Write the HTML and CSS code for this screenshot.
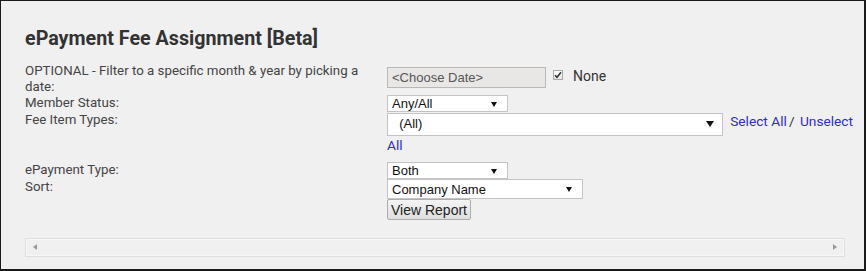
FILE: index.html
```html
<!DOCTYPE html>
<html lang="en">
<head>
    <meta charset="UTF-8">
    <meta name="viewport" content="width=device-width, initial-scale=1.0">
    <title>ePayment Fee Assignment</title>
    <link rel="stylesheet" href="styles.css">
</head>
<body>
    <div class="page">
        <h1>ePayment Fee Assignment [Beta]</h1>
        <div class="form-grid">
            <div class="label">OPTIONAL - Filter to a specific month &amp; year by picking a date:</div>
            <div class="control row-date">
                <input type="text" class="date-input" value="&lt;Choose Date&gt;" readonly>
                <label class="none-check">
                    <span class="check-box">
                        <svg width="8" height="8" viewBox="0 0 8 8"><path d="M1 4.2 L3 6.3 L7 1.3" fill="none" stroke="#333" stroke-width="1.6"/></svg>
                    </span>
                    None
                </label>
            </div>

            <div class="label">Member Status:</div>
            <div class="control">
                <span class="select-wrap"><select class="select sel-small"><option>Any/All</option></select></span>
            </div>

            <div class="label">Fee Item Types:</div>
            <div class="control fee-types">
                <span class="select-wrap"><select class="select sel-wide"><option>&nbsp;&nbsp;(All)</option></select></span>
                <a href="#" class="link">Select All</a> <span class="slash">/</span> <a href="#" class="link">Unselect All</a>
            </div>

            <div class="label row-gap">ePayment Type:</div>
            <div class="control row-gap">
                <span class="select-wrap"><select class="select sel-small"><option>Both</option></select></span>
            </div>

            <div class="label">Sort:</div>
            <div class="control">
                <span class="select-wrap"><select class="select sel-sort"><option>Company Name</option></select></span>
            </div>

            <div class="label"></div>
            <div class="control">
                <button class="btn">View Report</button>
            </div>
        </div>
        <div class="hscroll">
            <span class="arrow-left"></span>
            <span class="arrow-right"></span>
        </div>
    </div>
</body>
</html>
```

FILE: styles.css
```css
html, body {
    margin: 0;
    padding: 0;
}

body {
    background-color: #f0f0f0;
}

.page {
    box-sizing: border-box;
    width: 866px;
    height: 271px;
    border: 1px solid #1a1a1a;
    border-right-width: 2px;
    border-bottom-width: 2px;
    padding: 0 19px 0 24px;
    background-color: #f0f0f0;
    font-family: Roboto, "Liberation Sans", sans-serif;
    color: #444;
}

h1 {
    margin: 0 0 11px;
    padding-top: 25px;
    font-size: 19.7px;
    line-height: 26px;
    font-weight: bold;
    color: #333;
}

.form-grid {
    display: grid;
    grid-template-columns: 362px 1fr;
    align-items: start;
    margin-right: -12px;
}

.label {
    font-size: 13.3px;
    line-height: 16px;
    padding-right: 10px;
}

.control {
    font-size: 13px;
    line-height: 16px;
}

.row-date {
    display: flex;
    align-items: flex-start;
    padding-top: 4px;
    gap: 7px;
}

.date-input {
    box-sizing: border-box;
    width: 159px;
    height: 21px;
    margin: 0;
    padding: 0 4px;
    border: 1px solid #b8b8b8;
    background-color: #e8e7e5;
    color: #555;
    font-family: "Liberation Sans", Arial, sans-serif;
    font-size: 13px;
    outline: none;
}

.none-check {
    display: flex;
    align-items: flex-start;
    gap: 10px;
    font-size: 14px;
    color: #333;
    line-height: 18px;
}

.check-box {
    box-sizing: border-box;
    display: flex;
    align-items: center;
    justify-content: center;
    width: 10px;
    height: 10px;
    margin-top: 3px;
    border: 1px solid #a8a8a8;
    background: linear-gradient(#fdfdfd, #e6e6e6);
}

.select-wrap {
    position: relative;
    display: inline-block;
    vertical-align: top;
}

.select-wrap::after {
    content: "";
    position: absolute;
    right: 11px;
    top: 50%;
    margin-top: -2px;
    border-left: 3px solid transparent;
    border-right: 3px solid transparent;
    border-top: 5px solid #111;
    pointer-events: none;
}

.select {
    -webkit-appearance: none;
    appearance: none;
    box-sizing: border-box;
    margin: 0;
    padding: 0 4px;
    border: 1px solid #c4c4c4;
    border-radius: 0;
    background-color: #fff;
    color: #111;
    font-family: "Liberation Sans", Arial, sans-serif;
    font-size: 13px;
    outline: none;
}

.sel-small {
    width: 121px;
    height: 17px;
}

.sel-wide {
    width: 336px;
    height: 23px;
    margin-top: 1px;
    padding-bottom: 3px;
}

.fee-types .select-wrap {
    margin-right: 4px;
}

.fee-types .select-wrap::after {
    right: 9px;
    margin-top: -3px;
    border-left-width: 4px;
    border-right-width: 4px;
    border-top-width: 6px;
}

.sel-sort {
    width: 196px;
    height: 20px;
}

.fee-types {
    padding-bottom: 2px;
}

.link {
    color: #2b2bcf;
    text-decoration: none;
    font-size: 13.7px;
    line-height: 18px;
}

.slash {
    color: #333;
    margin-left: -1px;
    margin-right: 2px;
    font-size: 13.7px;
    line-height: 18px;
}

.row-gap {
    margin-top: 6px;
}

.btn {
    box-sizing: border-box;
    width: 84px;
    height: 21px;
    margin: 0;
    padding: 0;
    border: 1px solid #adadad;
    border-radius: 2px;
    background: linear-gradient(#f4f4f4, #dedede);
    color: #222;
    font-family: "Liberation Sans", Arial, sans-serif;
    font-size: 14px;
}

.hscroll {
    position: relative;
    box-sizing: border-box;
    height: 19px;
    margin-top: 18px;
    border: 1px solid #dedede;
    box-shadow: inset 0 0 0 1px #f7f7f7;
    background-color: #f0f0f0;
}

.arrow-left,
.arrow-right {
    position: absolute;
    top: 5px;
    border-top: 3px solid transparent;
    border-bottom: 3px solid transparent;
}

.arrow-left {
    left: 7px;
    border-right: 4px solid #999;
}

.arrow-right {
    right: 7px;
    border-left: 4px solid #999;
}
```
